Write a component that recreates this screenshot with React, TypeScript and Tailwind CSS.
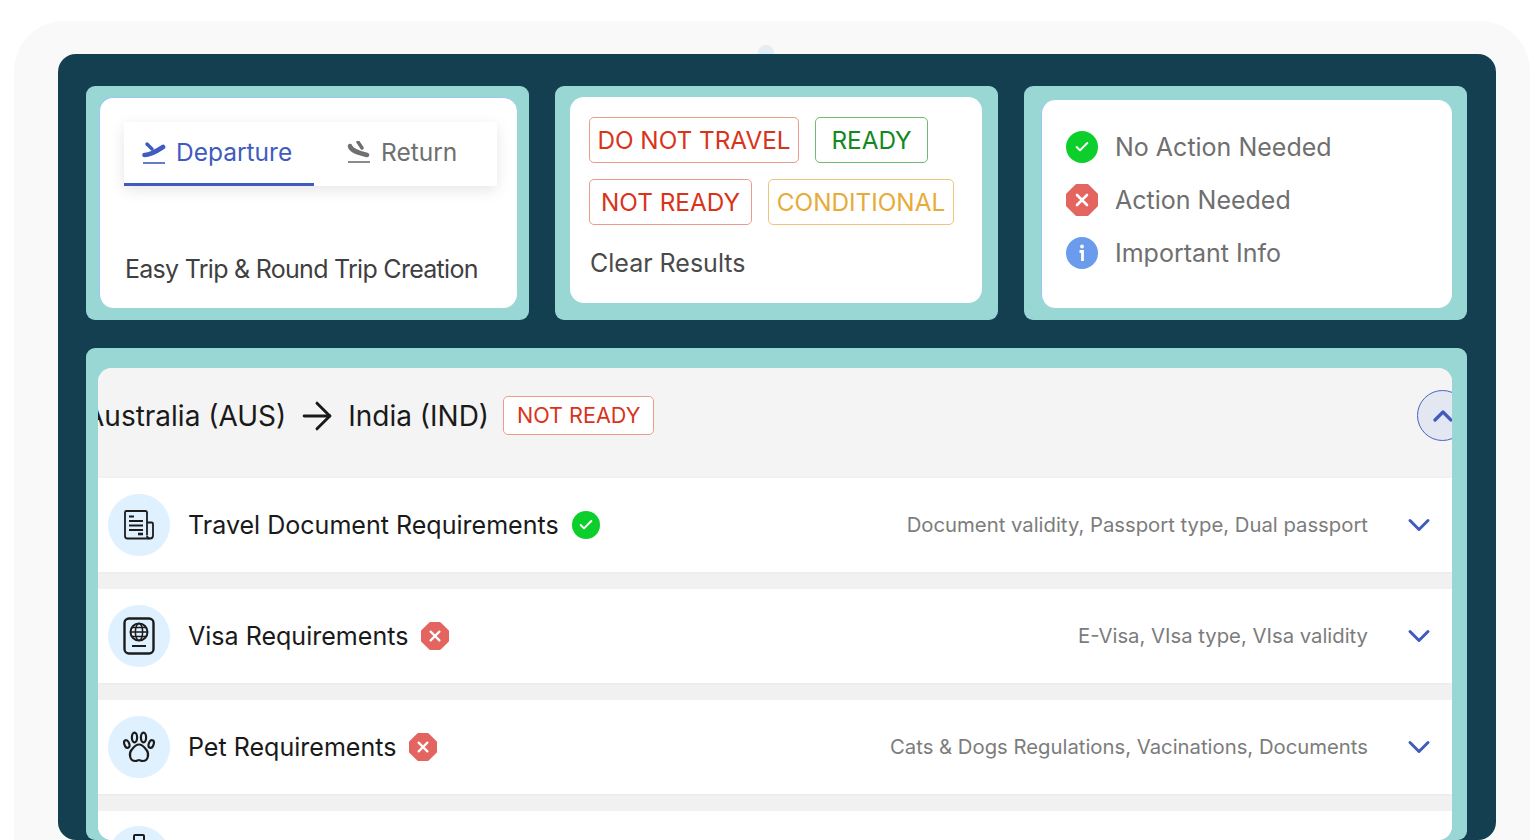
import { ArrowRight, ChevronDown, ChevronUp, Check } from 'lucide-react';

function StatusIcon({ kind, size }: { kind: 'ok' | 'bad' | 'info'; size: 'sm' | 'lg' }) {
	const box = size === 'lg' ? 'w-8 h-8' : 'w-7 h-7';
	if (kind === 'bad') {
		return (
			<svg viewBox="0 0 32 32" className={`${box} shrink-0`}>
				<polygon
					points="10.5,1.5 21.5,1.5 30.5,10.5 30.5,21.5 21.5,30.5 10.5,30.5 1.5,21.5 1.5,10.5"
					fill="#e4645f"
					stroke="#e4645f"
					strokeWidth="3"
					strokeLinejoin="round"
				/>
				<path d="M11 11 L21 21 M21 11 L11 21" stroke="#fff" strokeWidth="2.6" strokeLinecap="round" />
			</svg>
		);
	}
	if (kind === 'info') {
		return (
			<div className={`${box} shrink-0 rounded-full bg-[#6a9bec] flex items-center justify-center`}>
				<svg viewBox="0 0 32 32" className="w-8 h-8">
					<circle cx="16" cy="9.5" r="1.9" fill="#fff" />
					<path d="M13.5 14.5 H16.5 V24" fill="none" stroke="#fff" strokeWidth="2.8" />
				</svg>
			</div>
		);
	}
	return (
		<div className={`${box} shrink-0 rounded-full bg-[#0ccf2c] flex items-center justify-center`}>
			<Check className="w-4 h-4 text-white" strokeWidth={3} />
		</div>
	);
}

function Badge({ label, className }: { label: string; className: string }) {
	return (
		<span className={`h-[46px] pt-px flex items-center justify-center rounded-[5px] border bg-white text-[24.3px] ${className}`}>
			{label}
		</span>
	);
}

function TakeoffIcon() {
	return (
		<svg viewBox="0 0 24 24" className="w-6 h-6 shrink-0" fill="none" stroke="currentColor" strokeLinecap="round">
			<path d="M2.500 14 C8 14 15 10 21 6" strokeWidth="4.600" />
			<path d="M5 3 L10 8" strokeWidth="3.400" />
			<path d="M1 22 H23" strokeWidth="1.600" strokeLinecap="butt" />
		</svg>
	);
}

function LandingIcon() {
	return (
		<svg viewBox="0 0 24 24" className="w-6 h-6 shrink-0" fill="none" stroke="currentColor" strokeLinecap="round">
			<path d="M3 5 C4 10 12 12 20 14" strokeWidth="4.600" />
			<path d="M11 1 L15 7" strokeWidth="3.400" />
			<path d="M1 21 H23" strokeWidth="1.600" strokeLinecap="butt" />
		</svg>
	);
}

function DocumentIcon() {
	return (
		<svg viewBox="0 0 32 32" className="w-8 h-8" fill="none" stroke="#1c1c1c" strokeWidth="1.8">
			<path d="M24 26 V3.5 A1.5 1.5 0 0 0 22.5 2 H3.5 A1.5 1.5 0 0 0 2 3.5 V27 A2.5 2.5 0 0 0 4.500 29.500 H26.500" />
			<path d="M24 13.500 H28.500 A1.500 1.500 0 0 1 30 15 V26.500 A3 3 0 0 1 24 26.500" />
			<path d="M6 7.500 H11 M6 12 H20 M6 16.500 H20 M6 21 H20" strokeWidth="2" />
			<path d="M15 25 H20" strokeWidth="2.600" />
		</svg>
	);
}

function PassportIcon() {
	return (
		<svg viewBox="0 0 32 38" className="w-8 h-[38px]" fill="none" stroke="#1c1c1c" strokeWidth="2">
			<rect x="1.500" y="1.500" width="29" height="35" rx="4.500" strokeWidth="2.400" />
			<circle cx="16" cy="15" r="8.500" />
			<ellipse cx="16" cy="15" rx="3.600" ry="8.500" strokeWidth="1.500" />
			<path d="M7.500 15 H24.500 M9 10.500 H23 M9 19.500 H23" strokeWidth="1.300" />
			<path d="M9 29 H23" />
		</svg>
	);
}

function PawIcon() {
	return (
		<svg viewBox="0 0 32 32" className="w-8 h-8" fill="none" stroke="#1c1c1c" strokeWidth="2.200">
			<ellipse cx="3.800" cy="13" rx="2.400" ry="4" transform="rotate(-20 3.800 13)" />
			<ellipse cx="11.500" cy="6.500" rx="2.600" ry="4.800" />
			<ellipse cx="20.500" cy="6.500" rx="2.600" ry="4.800" />
			<ellipse cx="28.200" cy="13" rx="2.400" ry="4" transform="rotate(20 28.200 13)" />
			<path d="M16 13.500 C12 13.500 10.500 16.500 8.500 19 C6 22 6 30 12.500 30 C14 30 15 29 16 29 C17 29 18 30 19.500 30 C26 30 26 22 23.500 19 C21.500 16.500 20 13.500 16 13.500 Z" />
		</svg>
	);
}

const rows = [
	{
		title: 'Travel Document Requirements',
		detail: 'Document validity, Passport type, Dual passport',
		status: 'ok' as const,
		icon: <DocumentIcon />,
	},
	{
		title: 'Visa Requirements',
		detail: 'E-Visa, VIsa type, VIsa validity',
		status: 'bad' as const,
		icon: <PassportIcon />,
	},
	{
		title: 'Pet Requirements',
		detail: 'Cats & Dogs Regulations, Vacinations, Documents',
		status: 'bad' as const,
		icon: <PawIcon />,
	},
];

const legend = [
	{ label: 'No Action Needed', kind: 'ok' as const },
	{ label: 'Action Needed', kind: 'bad' as const },
	{ label: 'Important Info', kind: 'info' as const },
];

export default function App() {
	return (
		<div className="h-[840px] overflow-hidden bg-white pt-[21px] px-[14px] font-['Inter',sans-serif]">
			<div className="h-[819px] w-[1516px] rounded-t-[50px] bg-[#f9f9f9] pt-[33px] pl-[44px]">
				<div className="relative h-[786px] w-[1438px] rounded-[18px] bg-[#133f50] pt-[32px] pl-[28px]">
					{/* Camera dot above the tablet */}
					<div className="absolute -top-[9px] left-[700px] w-4 h-[9px] rounded-t-full bg-[#e4edf3]" />

					<div className="flex gap-[26px]">
						{/* Tabs card */}
						<div className="w-[443px] h-[234px] rounded-[9px] bg-[#98d7d3] pt-[11px] pl-[13px]">
							<div className="w-[418px] h-[211px] rounded-[14px] bg-white border-l border-t border-[#9cc4f5] pt-[24px] pl-[24px]">
								<div className="flex w-[373px] h-16 bg-white shadow-[0_4px_14px_rgba(0,0,0,0.1)]">
									<div className="w-[190px] flex items-center gap-[10px] pl-[18px] border-b-[3px] border-[#3f5bbf] text-[#3f5bbf]">
										<TakeoffIcon />
										<span className="text-[24.5px]">Departure</span>
									</div>
									<div className="flex items-center gap-[10px] pl-[33px] pb-[3px] text-[#6f6f6f]">
										<LandingIcon />
										<span className="text-[24.5px]">Return</span>
									</div>
								</div>
								<p className="mt-[67px] ml-px text-[25px] leading-[32px] tracking-[-0.72px] text-[#3f3f3f]">
									Easy Trip &amp; Round Trip Creation
								</p>
							</div>
						</div>

						{/* Result labels card */}
						<div className="w-[443px] h-[234px] rounded-[9px] bg-[#98d7d3] pt-[11px] pl-[15px]">
							<div className="w-[412px] h-[206px] rounded-[14px] bg-white pt-5 pl-[19px]">
								<div className="flex gap-4">
									<Badge label="DO NOT TRAVEL" className="w-[210px] border-[#ee9a8d] text-[#d9341a]" />
									<Badge label="READY" className="w-[113px] border-[#6dbb76] text-[#12891f]" />
								</div>
								<div className="flex gap-4 mt-4">
									<Badge label="NOT READY" className="w-[163px] border-[#ee9a8d] text-[#d9341a]" />
									<Badge label="CONDITIONAL" className="w-[186px] border-[#efc679] text-[#e6ab38]" />
								</div>
								<p className="mt-[22px] ml-px text-[25px] leading-[32px] text-[#4a4a4a]">Clear Results</p>
							</div>
						</div>

						{/* Legend card */}
						<div className="w-[443px] h-[234px] rounded-[9px] bg-[#98d7d3] pt-[14px] pl-[17px]">
							<div className="w-[411px] h-[208px] rounded-[14px] bg-white border-l border-[#9cc4f5] pt-[31px] pl-[24px] flex flex-col gap-[21px]">
								{legend.map((item) => (
									<div key={item.label} className="flex items-center gap-[17px] h-8">
										<StatusIcon kind={item.kind} size="lg" />
										<span className="text-[25px] leading-[32px] text-[#6f6f6f]">{item.label}</span>
									</div>
								))}
							</div>
						</div>
					</div>

					{/* Requirements card */}
					<div className="mt-7 w-[1381px] h-[492px] rounded-[9px] bg-[#98d7d3] pt-5 pl-3">
						<div className="w-[1354px] h-[472px] rounded-[14px] overflow-hidden bg-[#f1f1f1]">
							<div className="h-[108px] bg-[#f4f4f4] flex items-center overflow-hidden pb-[13px]">
								<span className="-ml-[13px] text-[28px] text-[#1a1a1a] whitespace-nowrap">Australia (AUS)</span>
								<ArrowRight className="ml-[9px] w-[44px] h-[44px] shrink-0 text-[#1a1a1a]" strokeWidth={1.6} />
								<span className="ml-[9px] text-[28px] text-[#1a1a1a] whitespace-nowrap">India (IND)</span>
								<span className="ml-[14px] w-[151px] h-[39px] flex items-center justify-center rounded-[5px] border border-[#ee9a8d] bg-white text-[21.6px] text-[#d9341a]">
									NOT READY
								</span>
								<div className="ml-auto -mr-[16px] w-[51px] h-[51px] shrink-0 rounded-full border border-[#4a63bf] bg-[#e3e7f2] flex items-center justify-center">
									<ChevronUp className="w-8 h-8 text-[#3f5bbf]" strokeWidth={2.4} />
								</div>
							</div>

							<div className="mt-[2px] flex flex-col gap-[17px]">
								{rows.map((row) => (
									<div key={row.title} className="h-[94px] bg-white flex items-center pl-[10px] pr-[15px] shadow-[0_1px_2px_rgba(0,0,0,0.03)]">
										<div className="w-[62px] h-[62px] shrink-0 rounded-full bg-[#dff0ff] flex items-center justify-center">
											{row.icon}
										</div>
										<span className="ml-[18px] mr-[13px] mt-px text-[25.05px] text-[#1a1a1a] whitespace-nowrap">{row.title}</span>
										<StatusIcon kind={row.status} size="sm" />
										<span className="ml-auto text-[20.3px] text-[#7c7c7c] whitespace-nowrap">{row.detail}</span>
										<ChevronDown className="ml-[33px] w-9 h-9 shrink-0 text-[#3f5bbf]" strokeWidth={2} />
									</div>
								))}
								<div className="h-[94px] bg-white pl-[10px] pt-[15px]">
									<div className="w-[62px] h-[62px] rounded-full bg-[#dff0ff] flex justify-center pt-[8px]">
										<div className="w-3 h-3 rounded-t-[2px] border-2 border-[#1c1c1c]" />
									</div>
								</div>
							</div>
						</div>
					</div>
				</div>
			</div>
		</div>
	);
}
